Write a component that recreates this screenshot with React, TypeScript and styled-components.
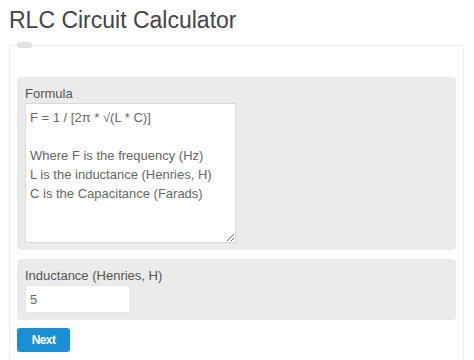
import { createGlobalStyle } from 'styled-components';
import styled from 'styled-components';

const GlobalStyle = createGlobalStyle`
  body {
    margin: 0;
    background: #fff;
    font-family: "Liberation Sans", Arial, sans-serif;
  }
`;

const _Page = styled.div`
  padding: 6px 10px 0 9px;
`;

const _Title = styled.h1`
  margin: 0 0 11px;
  font-size: 23px;
  line-height: 28px;
  font-weight: normal;
  color: #444;
`;

const _Card = styled.div`
  position: relative;
  width: 455px;
  box-sizing: border-box;
  border: 1px solid #ececec;
  border-radius: 3px;
  padding: 31px 7px 10px 7px;
  display: flex;
  flex-direction: column;
  gap: 9px;
`;

const _Pill = styled.span`
  position: absolute;
  top: -4px;
  left: 7px;
  width: 15px;
  height: 6px;
  border-radius: 3px;
  background: #e2e2e2;
`;

const _Panel = styled.div`
  background: #ebebeb;
  border-radius: 4px;
  padding: 8px 8px 7px;
  display: flex;
  flex-direction: column;
  align-items: flex-start;
`;

const _Label = styled.label`
  font-size: 13px;
  line-height: 18px;
  color: #555;
`;

const _TextArea = styled.textarea`
  width: 211px;
  height: 140px;
  box-sizing: border-box;
  border: 1px solid #d9d9d9;
  padding: 4px 4px;
  font-family: "Liberation Sans", Arial, sans-serif;
  font-size: 13px;
  line-height: 19px;
  color: #666;
  background: #fff;
  margin: 0;
`;

const _Input = styled.input`
  width: 105px;
  height: 28px;
  box-sizing: border-box;
  border: 1px solid #e6e6e6;
  padding: 0 4px;
  font-family: "Liberation Sans", Arial, sans-serif;
  font-size: 13px;
  color: #666;
  background: #fff;
  margin: 0;
`;

const _Button = styled.button`
  align-self: flex-start;
  margin-top: -1px;
  width: 53px;
  height: 24px;
  border: none;
  border-radius: 3px;
  background: #1b8fd6;
  color: #fff;
  font-family: "Liberation Sans", Arial, sans-serif;
  font-weight: bold;
  font-size: 12px;
  letter-spacing: -0.6px;
  padding: 0;
`;

const FORMULA = `F = 1 / [2π * √(L * C)]

Where F is the frequency (Hz)
L is the inductance (Henries, H)
C is the Capacitance (Farads)`;

export default function App() {
  return (
    <>
      <GlobalStyle />
      <_Page>
        <_Title>RLC Circuit Calculator</_Title>
        <_Card>
          <_Pill />
          <_Panel>
            <_Label>Formula</_Label>
            <_TextArea defaultValue={FORMULA} />
          </_Panel>
          <_Panel>
            <_Label>Inductance (Henries, H)</_Label>
            <_Input defaultValue="5" />
          </_Panel>
          <_Button>Next</_Button>
        </_Card>
      </_Page>
    </>
  );
}
